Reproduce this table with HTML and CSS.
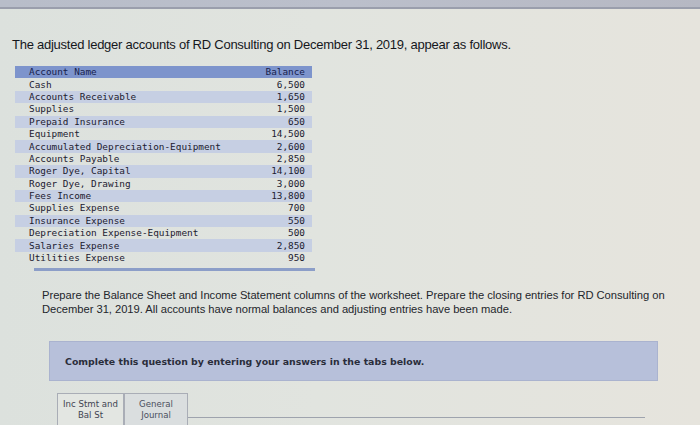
FILE: index.html
```html
<!DOCTYPE html>
<html lang="en">
<head>
<meta charset="utf-8">
<title>RD Consulting</title>
<link rel="stylesheet" href="styles.css">
</head>
<body>
<div class="topbar"></div>
<main class="content">
  <p class="intro">The adjusted ledger accounts of RD Consulting on December 31, 2019, appear as follows.</p>
  <table class="ledger">
    <thead>
      <tr><th class="name">Account Name</th><th class="bal">Balance</th></tr>
    </thead>
    <tbody>
      <tr><td class="name">Cash</td><td class="bal">6,500</td></tr>
      <tr><td class="name">Accounts Receivable</td><td class="bal">1,650</td></tr>
      <tr><td class="name">Supplies</td><td class="bal">1,500</td></tr>
      <tr><td class="name">Prepaid Insurance</td><td class="bal">650</td></tr>
      <tr><td class="name">Equipment</td><td class="bal">14,500</td></tr>
      <tr><td class="name">Accumulated Depreciation-Equipment</td><td class="bal">2,600</td></tr>
      <tr><td class="name">Accounts Payable</td><td class="bal">2,850</td></tr>
      <tr><td class="name">Roger Dye, Capital</td><td class="bal">14,100</td></tr>
      <tr><td class="name">Roger Dye, Drawing</td><td class="bal">3,000</td></tr>
      <tr><td class="name">Fees Income</td><td class="bal">13,800</td></tr>
      <tr><td class="name">Supplies Expense</td><td class="bal">700</td></tr>
      <tr><td class="name">Insurance Expense</td><td class="bal">550</td></tr>
      <tr><td class="name">Depreciation Expense-Equipment</td><td class="bal">500</td></tr>
      <tr><td class="name">Salaries Expense</td><td class="bal">2,850</td></tr>
      <tr><td class="name">Utilities Expense</td><td class="bal">950</td></tr>
    </tbody>
  </table>
  <div class="ledger-rule"></div>
  <p class="prompt">Prepare the Balance Sheet and Income Statement columns of the worksheet. Prepare the closing entries for RD Consulting on December 31, 2019. All accounts have normal balances and adjusting entries have been made.</p>
  <div class="banner">Complete this question by entering your answers in the tabs below.</div>
  <div class="tabs">
    <div class="tab tab-active">Inc Stmt and<br>Bal St</div>
    <div class="tab">General<br>Journal</div>
    <div class="tab-fill"></div>
  </div>
</main>
</body>
</html>
```

FILE: styles.css
```css
html, body {
  margin: 0;
  padding: 0;
}
body {
  width: 700px;
  height: 425px;
  overflow: hidden;
  background: linear-gradient(90deg, #dce1dd 0%, #e1e4df 45%, #e6e4dd 100%);
  font-family: "Liberation Sans", Arial, sans-serif;
  color: #1d1f24;
}
.topbar {
  height: 7px;
  background: linear-gradient(90deg, #b8bdc9 0%, #bbbfcb 50%, #b6b8c3 100%);
  border-bottom: 2px solid #9a9eac;
}
.content {
  padding: 0 0 0 12px;
}
.intro {
  margin: 28px 0 0 0;
  font-size: 13px;
  line-height: 16px;
  letter-spacing: -0.25px;
  color: #15171c;
}
.ledger {
  margin: 13px 0 0 3px;
  width: 297px;
  border-collapse: collapse;
  font-family: "DejaVu Sans Mono", "Liberation Mono", monospace;
  font-size: 9.4px;
  color: #1c2030;
}
.ledger th, .ledger td {
  height: 12.4px;
  padding: 0;
  line-height: 12px;
  font-weight: normal;
  white-space: nowrap;
}
.ledger thead tr {
  background: #7d94cc;
  color: #17224d;
}
.ledger tbody tr:nth-child(even) {
  background: #c6cfe3;
}
.ledger .name {
  text-align: left;
  padding-left: 14px;
}
.ledger .bal {
  text-align: right;
  padding-right: 7px;
}
.ledger-rule {
  margin: 4px 0 0 22px;
  width: 281px;
  height: 3px;
  background: #8c9ec8;
}
.prompt {
  margin: 18px 0 0 30px;
  width: 638px;
  font-size: 11.2px;
  line-height: 13.5px;
  letter-spacing: -0.03px;
  color: #23262c;
}
.banner {
  margin: 25px 0 0 37px;
  width: 592px;
  height: 38px;
  padding-left: 15px;
  display: flex;
  align-items: center;
  background: #b7c0da;
  border: 1px solid #aab3cf;
  font-family: "DejaVu Sans", Verdana, sans-serif;
  font-weight: bold;
  font-size: 9.4px;
  color: #2a2d3a;
}
.tabs {
  margin: 12px 0 0 45px;
  display: flex;
  align-items: flex-start;
}
.tab {
  width: 64px;
  height: 34px;
  padding-top: 5px;
  box-sizing: border-box;
  text-align: center;
  font-family: "DejaVu Sans", Tahoma, sans-serif;
  font-size: 8.6px;
  line-height: 10.5px;
  color: #4a4f5e;
  background: #dadedf;
  border: 1px solid #a9adb6;
  border-bottom: none;
}
.tab-active {
  width: 67px;
  background: #e3e6e2;
  color: #3f4452;
}
.tab-fill {
  width: 457px;
  height: 24px;
  border-bottom: 1px solid #9ea3ad;
}
```
